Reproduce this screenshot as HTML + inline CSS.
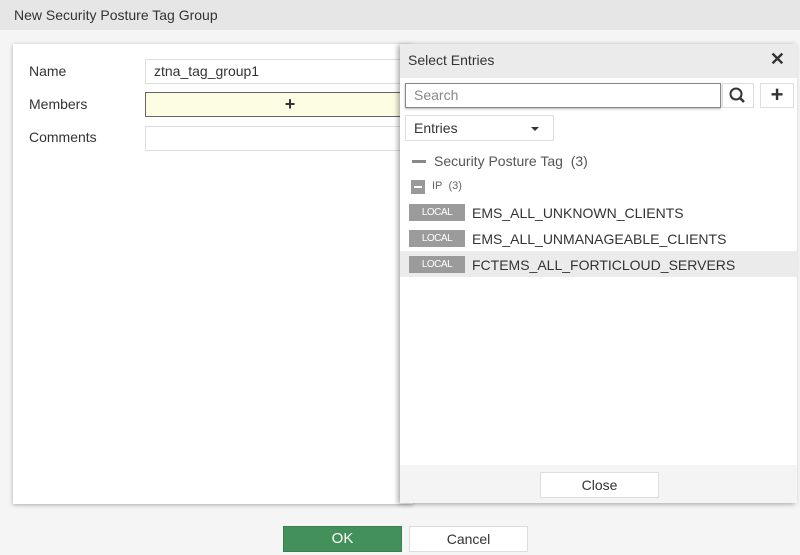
<!DOCTYPE html>
<html><head><style>
*{box-sizing:border-box;margin:0;padding:0}
body{width:800px;height:555px;background:#f5f5f5;font-family:"Liberation Sans",sans-serif;color:#333;position:relative;overflow:hidden;font-size:14px}
.a{position:absolute}
.hdr{left:0;top:0;width:800px;height:30px;background:#e6e6e6;font-size:14px;padding:7px 14px;color:#333}
.card{left:13px;top:44px;width:400px;height:460px;background:#fff;box-shadow:0 1px 4px rgba(0,0,0,.3)}
.lbl{font-size:14px;color:#333}
.inp{background:#fff;border:1px solid #ddd;height:25px}
.panel{left:400px;top:44px;width:397px;height:459px;background:#fff;box-shadow:-2px 1px 5px rgba(0,0,0,.35)}
.tag{background:#9b9b9b;color:#fff;font-size:10px;width:56px;height:17px;text-align:center;line-height:17px;letter-spacing:-.5px}
.row{font-size:14px;color:#333}
.btn{border:1px solid #ddd;background:#fff;text-align:center;font-size:14px;line-height:24px}
</style></head><body>
<div class="a hdr">New Security Posture Tag Group</div>
<div class="a card"></div>
<div class="a lbl" style="left:29px;top:63px">Name</div>
<div class="a lbl" style="left:29px;top:96px">Members</div>
<div class="a lbl" style="left:29px;top:129px">Comments</div>
<div class="a inp" style="left:145px;top:59px;width:260px;padding:3px 8px;font-size:14px">ztna_tag_group1</div>
<div class="a" style="left:145px;top:92px;width:260px;height:25px;background:#fdfde3;border:1px solid #666;text-align:center;font-size:18px;font-weight:bold;line-height:22px;padding-left:30px">+</div>
<div class="a inp" style="left:145px;top:126px;width:260px"></div>
<div class="a panel">
 <div class="a" style="left:0;top:0;width:397px;height:34px;background:#ebebeb;padding:8px 8px;font-size:14px">Select Entries<span style="position:absolute;right:12px;top:5px;font-size:18px;font-weight:bold">✕</span></div>
 <div class="a" style="left:5px;top:39px;width:316px;height:25px;border:1px solid #888;box-shadow:0 1px 2px rgba(0,0,0,.3);padding:3px 8px;color:#888">Search</div>
 <div class="a" style="left:322px;top:39px;width:32px;height:25px;border:1px solid #ddd">
  <svg width="30" height="23" viewBox="0 0 30 23"><circle cx="13" cy="10" r="5.5" fill="none" stroke="#333" stroke-width="2"/><line x1="17" y1="14" x2="21" y2="18" stroke="#333" stroke-width="2.5"/></svg></div>
 <div class="a" style="left:360px;top:39px;width:34px;height:25px;border:1px solid #ddd;text-align:center;font-size:22px;font-weight:bold;line-height:22px">+</div>
 <div class="a" style="left:5px;top:71px;width:149px;height:26px;border:1px solid #ddd;padding:4px 8px">Entries<span style="position:absolute;left:125px;top:11px;width:0;height:0;border-left:4px solid transparent;border-right:4px solid transparent;border-top:4px solid #333"></span></div>
 <div class="a" style="left:12px;top:116px;width:14px;height:3px;background:#888"></div>
 <div class="a row" style="left:34px;top:109px;color:#555">Security Posture Tag&nbsp; (3)</div>
 <div class="a" style="left:11px;top:136px;width:14px;height:14px;background:#999"><div style="margin:6px 3px;height:2px;background:#fff"></div></div>
 <div class="a" style="left:32px;top:136px;font-size:11px;color:#666">IP&nbsp; (3)</div>
 <div class="a" style="left:0;top:207px;width:397px;height:26px;background:#ebebeb"></div>
 <div class="a tag" style="left:9px;top:160px">LOCAL</div><div class="a row" style="left:72px;top:161px">EMS_ALL_UNKNOWN_CLIENTS</div>
 <div class="a tag" style="left:9px;top:186px">LOCAL</div><div class="a row" style="left:72px;top:187px">EMS_ALL_UNMANAGEABLE_CLIENTS</div>
 <div class="a tag" style="left:9px;top:212px">LOCAL</div><div class="a row" style="left:72px;top:213px">FCTEMS_ALL_FORTICLOUD_SERVERS</div>
 <div class="a" style="left:0;top:421px;width:397px;height:38px;background:#f4f4f4"></div>
 <div class="a btn" style="left:140px;top:428px;width:119px;height:26px">Close</div>
</div>
<div class="a" style="left:283px;top:526px;width:119px;height:26px;background:#43905a;border:1px solid #3a804f;color:#fff;text-align:center;line-height:24px;font-size:15px">OK</div>
<div class="a btn" style="left:409px;top:526px;width:119px;height:26px">Cancel</div>
</body></html>
